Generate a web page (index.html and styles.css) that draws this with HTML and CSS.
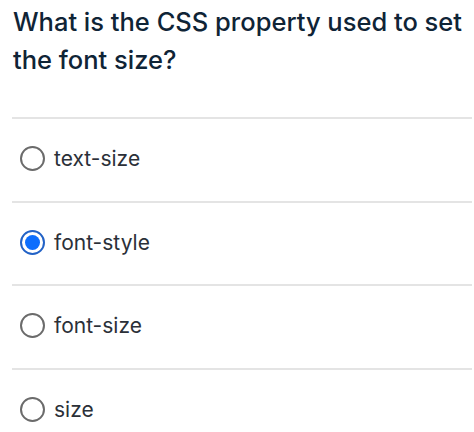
FILE: index.html
```html
<!DOCTYPE html>
<html lang="en">
<head>
  <meta charset="UTF-8" />
  <meta name="viewport" content="width=device-width, initial-scale=1.0"/>
  <title>Quiz Question</title>
  <link rel="stylesheet" href="styles.css">
</head>
<body>

<div class="quiz">
  <h2 class="question">What is the CSS property used to set the font size?</h2>

  <div class="options">
    <label class="option">
      <input type="radio" name="answer" value="text-size">
      <span class="radio"></span>
      <span class="option-text">text-size</span>
    </label>

    <label class="option">
      <input type="radio" name="answer" value="font-style" checked>
      <span class="radio"></span>
      <span class="option-text">font-style</span>
    </label>

    <label class="option">
      <input type="radio" name="answer" value="font-size">
      <span class="radio"></span>
      <span class="option-text">font-size</span>
    </label>

    <label class="option">
      <input type="radio" name="answer" value="size">
      <span class="radio"></span>
      <span class="option-text">size</span>
    </label>
  </div>
</div>

</body>
</html>
```

FILE: styles.css
```css
* {
  box-sizing: border-box;
}

body {
  margin: 0;
  background: #fff;
  font-family: 'Inter', sans-serif;
}

.quiz {
  padding: 3px 2px 0 12px;
}

.question {
  margin: 0 0 0 1px;
  font-size: 25.5px;
  font-weight: 500;
  line-height: 38px;
  color: #0f2436;
}

.options {
  margin-top: 38px;
}

.option {
  display: flex;
  align-items: flex-start;
  height: 83.5px;
  padding: 27px 0 0 8px;
  border-top: 2px solid #e4e4e4;
  cursor: pointer;
}

.option input {
  display: none;
}

.radio {
  position: relative;
  flex-shrink: 0;
  width: 25px;
  height: 25px;
  border: 2px solid #6b6b6b;
  border-radius: 50%;
  background: #fff;
}

.option input:checked + .radio {
  border-color: #2262c6;
}

.option input:checked + .radio::after {
  content: "";
  position: absolute;
  top: 3px;
  left: 3px;
  width: 15px;
  height: 15px;
  border-radius: 50%;
  background: #0d6efd;
}

.option-text {
  margin-left: 9px;
  font-family: 'Inter', sans-serif;
  font-size: 21px;
  line-height: 25px;
  color: #2b3038;
}
```
